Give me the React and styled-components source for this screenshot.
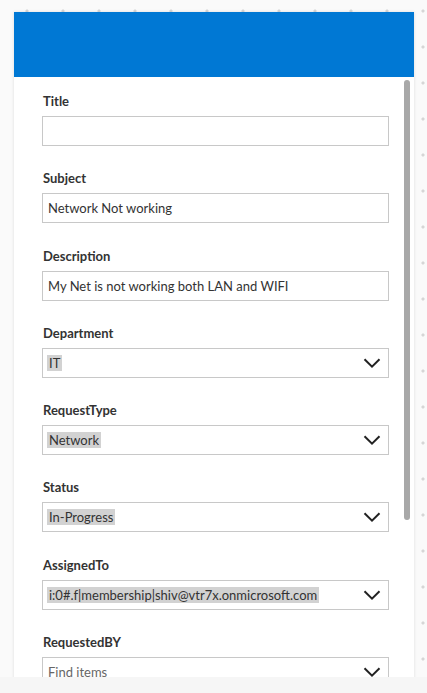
import React from "react";
import styled, { createGlobalStyle } from "styled-components";

// Поля форми, як у списку SharePoint
const fields = [
    { label: "Title", type: "text", value: "" },
    { label: "Subject", type: "text", value: "Network Not working" },
    { label: "Description", type: "text", value: "My Net is not working both LAN and WIFI" },
    { label: "Department", type: "select", value: "IT" },
    { label: "RequestType", type: "select", value: "Network" },
    { label: "Status", type: "select", value: "In-Progress" },
    { label: "AssignedTo", type: "select", value: "i:0#.f|membership|shiv@vtr7x.onmicrosoft.com" },
    { label: "RequestedBY", type: "select", value: "", placeholder: "Find items" },
];

export default function App() {
    return (
        <>
            <GlobalStyle />
            <Canvas>
                <Card>
                    <Header />
                    <Body>
                        <Form>
                            {fields.map(FieldItem)}
                        </Form>
                        <Thumb />
                    </Body>
                </Card>
            </Canvas>
            <Footer />
        </>
    );
}

function FieldItem({ label, type, value, placeholder }) {
    return (
        <Field key={label}>
            <Label>{label}</Label>
            {type === "text" ? (
                <TextBox>{value}</TextBox>
            ) : (
                <Select>
                    {value ? <Chip>{value}</Chip> : <Placeholder>{placeholder}</Placeholder>}
                    <Chevron viewBox="0 0 18 10">
                        <path d="M1.5 1.2 L9 8.6 L16.5 1.2" fill="none" stroke="#222" strokeWidth="2" />
                    </Chevron>
                </Select>
            )}
        </Field>
    );
}

const GlobalStyle = createGlobalStyle`
    html, body {
        margin: 0;
        height: 100%;
        background: #f6f6f6;
        font-family: "Lato", "Noto Sans", sans-serif;
    }
    #root {
        height: 100%;
        display: flex;
        flex-direction: column;
    }
`;

// Полотно з крапками
const Canvas = styled.div`
    height: 677px;
    overflow: hidden;
    background-color: #fafafa;
    background-image: radial-gradient(circle, #d6d6d6 1.2px, transparent 1.9px);
    background-size: 36px 36px;
    background-position: 9px -7px;
    padding: 12px 0 0 14px;
    box-sizing: border-box;
`;

const Footer = styled.div`
    flex: 1;
    background: #f6f6f6;
`;

const Card = styled.div`
    width: 400px;
    height: 700px;
    background: #fff;
    box-shadow: 0 0 3px rgba(0, 0, 0, 0.12);
    display: flex;
    flex-direction: column;
`;

const Header = styled.div`
    height: 65px;
    background: #0078d4;
    flex-shrink: 0;
`;

const Body = styled.div`
    position: relative;
    flex: 1;
    overflow: hidden;
`;

const Form = styled.div`
    display: flex;
    flex-direction: column;
    padding: 15px 25px 0 28px;
`;

const Field = styled.div`
    display: flex;
    flex-direction: column;
    gap: 6px;
    margin-bottom: 23.3px;
`;

const Label = styled.div`
    font-size: 13px;
    font-weight: 700;
    line-height: 18px;
    color: #333;
    padding-left: 1px;
`;

const TextBox = styled.div`
    height: 30px;
    box-sizing: border-box;
    border: 1px solid #c8c8c8;
    padding: 0 5px;
    display: flex;
    align-items: center;
    font-size: 13px;
    color: #333;
    white-space: nowrap;
`;

const Select = styled(TextBox)`
    justify-content: space-between;
    padding: 0 5px 0 4px;
`;

const Chip = styled.span`
    background: #d2d2d2;
    padding: 0 2px;
    line-height: 16px;
`;

const Placeholder = styled.span`
    color: #666;
    padding-left: 1px;
`;

const Chevron = styled.svg`
    width: 18px;
    height: 10px;
    margin-right: 2px;
`;

// Повзунок прокрутки поверх вмісту
const Thumb = styled.div`
    position: absolute;
    top: 3px;
    right: 4px;
    width: 6px;
    height: 440px;
    border-radius: 3px;
    background: #a8a8a8;
`;
